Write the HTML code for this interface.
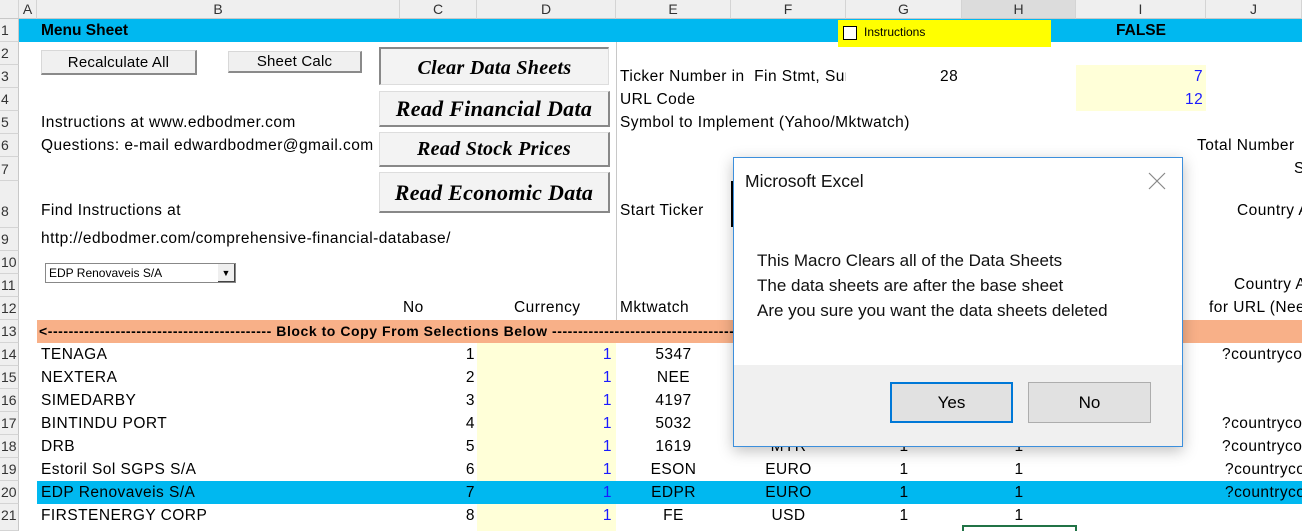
<!DOCTYPE html>
<html><head><meta charset="utf-8"><style>
*{margin:0;padding:0;box-sizing:border-box}
body{width:1302px;height:531px;overflow:hidden;background:#fff;position:relative;font-family:"Liberation Sans",sans-serif;font-size:15.5px;letter-spacing:0.45px;color:#000}
.a{position:absolute;white-space:nowrap}
.hd{position:absolute;top:0;height:19px;background:#efefef;border-right:1px solid #d4d4d4;border-bottom:1px solid #c8c8c8;text-align:center;font-size:14px;letter-spacing:0;line-height:19px;color:#333}
.rh{position:absolute;left:0;width:19px;background:#efefef;border-bottom:1px solid #d4d4d4;border-right:1px solid #c8c8c8;font-size:14px;letter-spacing:0;color:#333;padding-left:1px;overflow:hidden}
.btn{position:absolute;background:#f0f0f0;border:1px solid #d8d8d8;border-right:2px solid #8a8a8a;border-bottom:2px solid #8a8a8a;text-align:center;font-size:15px;letter-spacing:0.2px}
.big{position:absolute;background:#f3f3f3;border:1px solid #ddd;border-right:2px solid #888;border-bottom:2px solid #888;text-align:center;font-family:"Liberation Serif",serif;font-style:italic;font-weight:bold;font-size:20px;letter-spacing:0.3px}
.blue{color:#1a1aff}
</style></head><body>
<div class="hd" style="left:0;width:19px"></div>
<div class="hd" style="left:19px;width:18px">A</div>
<div class="hd" style="left:37px;width:363px">B</div>
<div class="hd" style="left:400px;width:77px">C</div>
<div class="hd" style="left:477px;width:139px">D</div>
<div class="hd" style="left:616px;width:115px">E</div>
<div class="hd" style="left:731px;width:115px">F</div>
<div class="hd" style="left:846px;width:116px">G</div>
<div class="hd" style="left:962px;width:114px;background:#dcdcdc">H</div>
<div class="hd" style="left:1076px;width:130px">I</div>
<div class="hd" style="left:1206px;width:96px">J</div>
<div class="rh" style="top:19px;height:23px;line-height:23px">1</div>
<div class="rh" style="top:42px;height:23px;line-height:23px">2</div>
<div class="rh" style="top:65px;height:23px;line-height:23px">3</div>
<div class="rh" style="top:88px;height:23px;line-height:23px">4</div>
<div class="rh" style="top:111px;height:23px;line-height:23px">5</div>
<div class="rh" style="top:134px;height:23px;line-height:23px">6</div>
<div class="rh" style="top:157px;height:24px;line-height:24px">7</div>
<div class="rh" style="top:181px;height:47px;line-height:60px">8</div>
<div class="rh" style="top:228px;height:23px;line-height:23px">9</div>
<div class="rh" style="top:251px;height:23px;line-height:23px">10</div>
<div class="rh" style="top:274px;height:23px;line-height:23px">11</div>
<div class="rh" style="top:297px;height:23px;line-height:23px">12</div>
<div class="rh" style="top:320px;height:23px;line-height:23px">13</div>
<div class="rh" style="top:343px;height:23px;line-height:23px">14</div>
<div class="rh" style="top:366px;height:23px;line-height:23px">15</div>
<div class="rh" style="top:389px;height:23px;line-height:23px">16</div>
<div class="rh" style="top:412px;height:23px;line-height:23px">17</div>
<div class="rh" style="top:435px;height:23px;line-height:23px">18</div>
<div class="rh" style="top:458px;height:23px;line-height:23px">19</div>
<div class="rh" style="top:481px;height:23px;line-height:23px">20</div>
<div class="rh" style="top:504px;height:27px;line-height:23px">21</div>

<div class="a" style="left:19px;top:19px;width:1283px;height:23px;background:#00b8f0"></div>
<div class="a" style="left:41px;top:19px;line-height:23px;font-weight:bold;letter-spacing:0">Menu Sheet</div>
<div class="a" style="left:838px;top:20px;width:213px;height:27px;background:#ffff00"></div>
<div class="a" style="left:843px;top:26px;width:14px;height:14px;border:1px solid #000;background:#fff"></div>
<div class="a" style="left:864px;top:25px;font-size:12px;letter-spacing:0">Instructions</div>
<div class="a" style="left:1076px;top:19px;width:130px;line-height:23px;text-align:center;font-weight:bold;letter-spacing:0">FALSE</div>
<div class="a" style="left:616px;top:42px;width:1px;height:278px;background:#c8c8c8"></div>

<div class="btn" style="left:41px;top:50px;height:25px;line-height:23px;width:156px">Recalculate All</div>
<div class="btn" style="left:228px;top:51px;width:134px;height:22px;line-height:20px">Sheet Calc</div>
<div class="big" style="left:379px;top:47px;width:230px;height:38px;line-height:38px;border-left:2px solid #888;border-top:2px solid #888;border-right:1px solid #ddd;border-bottom:1px solid #ddd">Clear Data Sheets</div>
<div class="big" style="left:379px;top:91px;width:231px;height:36px;line-height:34px;font-size:22px">Read Financial Data</div>
<div class="big" style="left:379px;top:132px;width:231px;height:35px;line-height:33px">Read Stock Prices</div>
<div class="big" style="left:379px;top:172px;width:231px;height:41px;line-height:40px;font-size:22px">Read Economic Data</div>

<div class="a" style="left:41px;top:114px">Instructions at www.edbodmer.com</div>
<div class="a" style="left:41px;top:137px">Questions: e-mail edwardbodmer@gmail.com</div>
<div class="a" style="left:41px;top:202px">Find Instructions at</div>
<div class="a" style="left:41px;top:230px">http://edbodmer.com/comprehensive-financial-database/</div>

<div class="a" style="left:620px;top:68px;width:226px;overflow:hidden">Ticker Number in&nbsp; Fin Stmt, Summary</div>
<div class="a" style="left:940px;top:68px">28</div>
<div class="a" style="left:1076px;top:65px;width:130px;height:46px;background:#ffffd8"></div>
<div class="a blue" style="left:1194px;top:68px">7</div>
<div class="a blue" style="left:1185px;top:91px">12</div>
<div class="a" style="left:620px;top:91px">URL Code</div>
<div class="a" style="left:620px;top:114px">Symbol to Implement (Yahoo/Mktwatch)</div>
<div class="a" style="left:1197px;top:137px">Total Number</div>
<div class="a" style="left:1294px;top:160px">S</div>
<div class="a" style="left:620px;top:202px">Start Ticker</div>
<div class="a" style="left:731px;top:181px;width:2px;height:46px;background:#000"></div>
<div class="a" style="left:1237px;top:202px">Country A</div>

<div class="a" style="left:45px;top:263px;width:191px;height:20px;border:1px solid #888;background:#fff;font-size:12px;letter-spacing:0;line-height:18px;padding-left:3px">EDP Renovaveis S/A</div>
<div class="a" style="left:218px;top:264px;width:17px;height:18px;background:#efefef;border-right:1px solid #444;border-bottom:1px solid #444;font-size:9px;text-align:center;line-height:18px;letter-spacing:0">▼</div>

<div class="a" style="left:403px;top:299px">No</div>
<div class="a" style="left:514px;top:299px">Currency</div>
<div class="a" style="left:620px;top:299px">Mktwatch</div>
<div class="a" style="left:1234px;top:276px">Country A</div>
<div class="a" style="left:1209px;top:299px">for URL (Nee</div>

<div class="a" style="left:37px;top:320px;width:1265px;height:23px;background:#f8b088"></div>
<div class="a" style="left:39px;top:320px;width:695px;overflow:hidden;line-height:23px;font-weight:bold;font-size:14px;letter-spacing:0.55px">&lt;------------------------------------------- Block to Copy From Selections Below ------------------------------------------------</div>
<div class="a" style="left:477px;top:343px;width:139px;height:161px;background:#ffffd8"></div>
<div class="a" style="left:477px;top:504px;width:139px;height:27px;background:#ffffd8"></div>
<div class="a" style="left:37px;top:481px;width:1265px;height:23px;background:#00b8f0"></div>

<div class="a" style="left:41px;top:343px;line-height:23px">
TENAGA<br>NEXTERA<br>SIMEDARBY<br>BINTINDU PORT<br>DRB<br>Estoril Sol SGPS S/A<br>EDP Renovaveis S/A<br>FIRSTENERGY CORP</div>
<div class="a" style="left:460px;top:343px;line-height:23px;text-align:right;width:15px">1<br>2<br>3<br>4<br>5<br>6<br>7<br>8</div>
<div class="a blue" style="left:597px;top:343px;line-height:23px;text-align:right;width:15px">1<br>1<br>1<br>1<br>1<br>1<br>1<br>1</div>
<div class="a" style="left:616px;top:343px;width:115px;line-height:23px;text-align:center">5347<br>NEE<br>4197<br>5032<br>1619<br>ESON<br>EDPR<br>FE</div>
<div class="a" style="left:731px;top:435px;width:115px;line-height:23px;text-align:center">MYR<br>EURO<br>EURO<br>USD</div>
<div class="a" style="left:846px;top:435px;width:116px;line-height:23px;text-align:center">1<br>1<br>1<br>1</div>
<div class="a" style="left:962px;top:435px;width:114px;line-height:23px;text-align:center">1<br>1<br>1<br>1</div>
<div class="a" style="left:1222px;top:343px;line-height:23px">?countryco</div>
<div class="a" style="left:1222px;top:412px;line-height:23px">?countryco<br>?countryco</div>
<div class="a" style="left:1225px;top:458px;line-height:23px">?countryco<br>?countryco</div>
<div class="a" style="left:962px;top:525px;width:115px;height:6px;border:2px solid #217346;border-bottom:none"></div>

<div class="a" style="left:733px;top:157px;width:450px;height:290px;background:#fff;border:1px solid #3c8fdc;box-shadow:0 4px 14px rgba(0,0,0,.25);letter-spacing:0">
  <div class="a" style="left:11px;top:13px;font-size:17.5px;color:#111">Microsoft Excel</div>
  <svg class="a" style="left:414px;top:14px" width="18" height="18"><path d="M1 1L17 17M17 1L1 17" stroke="#888" stroke-width="1.2"/></svg>
  <div class="a" style="left:23px;top:90px;font-size:17px;line-height:25px;color:#111">This Macro Clears all of the Data Sheets<br>The data sheets are after the base sheet<br>Are you sure you want the data sheets deleted</div>
  <div class="a" style="left:0;top:207px;width:448px;height:81px;background:#f0f0f0"></div>
  <div class="a" style="left:156px;top:224px;width:123px;height:41px;background:#e1e1e1;border:2px solid #0078d7;text-align:center;line-height:37px;font-size:17px">Yes</div>
  <div class="a" style="left:294px;top:224px;width:123px;height:41px;background:#e1e1e1;border:1px solid #adadad;text-align:center;line-height:39px;font-size:17px">No</div>
</div>
</body></html>
